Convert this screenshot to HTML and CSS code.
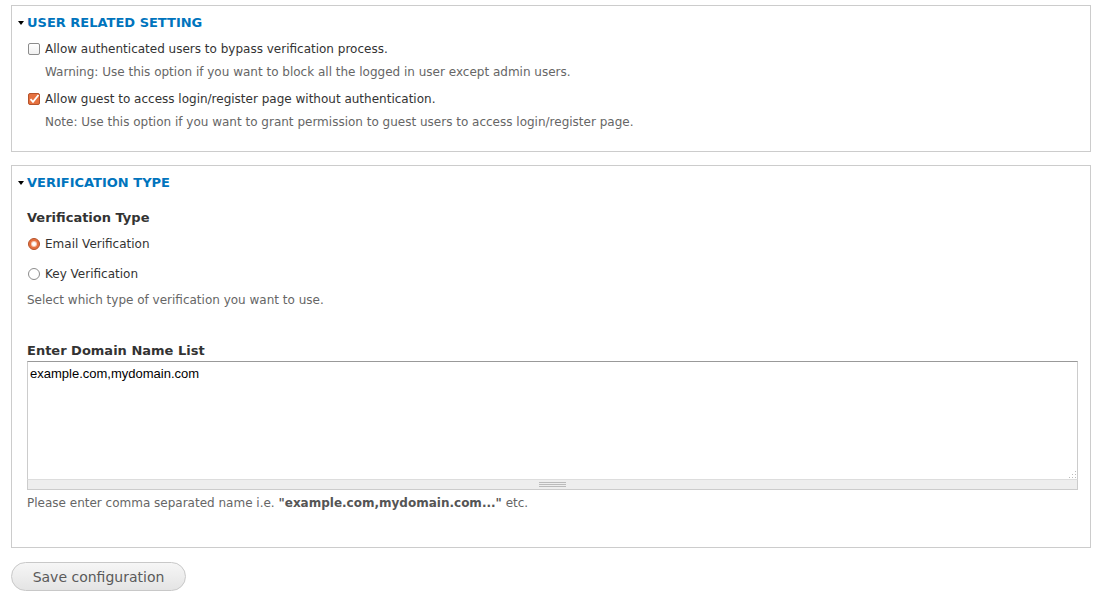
FILE: index.html
```html
<!DOCTYPE html>
<html>
<head>
<meta charset="utf-8">
<link rel="stylesheet" href="styles.css">
</head>
<body>
<form class="page">
  <div class="fieldset fs-user">
    <div class="legend"><span class="tri"></span>USER RELATED SETTING</div>
    <div class="item first">
      <span class="check"></span>
      <span class="label">Allow authenticated users to bypass verification process.</span>
    </div>
    <div class="desc indent">Warning: Use this option if you want to block all the logged in user except admin users.</div>
    <div class="item second">
      <span class="check checked"><svg width="12" height="12" viewBox="0 0 12 12"><path d="M2.5 6.2 L5 8.8 L10.5 2" fill="none" stroke="#fff" stroke-width="1.8"/></svg></span>
      <span class="label">Allow guest to access login/register page without authentication.</span>
    </div>
    <div class="desc indent">Note: Use this option if you want to grant permission to guest users to access login/register page.</div>
  </div>

  <div class="fieldset fs-type">
    <div class="legend"><span class="tri"></span>VERIFICATION TYPE</div>
    <div class="field-title">Verification Type</div>
    <div class="item radio-email">
      <span class="radio checked"><span class="dot"></span></span>
      <span class="label">Email Verification</span>
    </div>
    <div class="item radio-key">
      <span class="radio"></span>
      <span class="label">Key Verification</span>
    </div>
    <div class="desc sel-desc">Select which type of verification you want to use.</div>

    <div class="field-title domain-title">Enter Domain Name List</div>
    <div class="textarea-wrap">
      <div class="textarea">example.com,mydomain.com<span class="resize"></span></div>
      <div class="grippie"><span class="grip"></span></div>
    </div>
    <div class="desc help">Please enter comma separated name i.e. <strong>"example.com,mydomain.com..."</strong> etc.</div>
  </div>

  <div class="actions">
    <button type="button" class="btn">Save configuration</button>
  </div>
</form>
</body>
</html>
```

FILE: styles.css
```css
html, body {
  margin: 0;
  padding: 0;
  background: #fff;
}
body {
  font-family: "DejaVu Sans", Verdana, sans-serif;
  font-size: 12px;
  line-height: 18px;
  color: #333;
}
.page {
  padding: 5px 14px 0 11px;
}
.fieldset {
  border: 1px solid #ccc;
  padding: 8px 12px 0 15px;
}
.fs-user {
  padding-bottom: 20px;
}
.fs-type {
  margin-top: 13px;
  padding-bottom: 35px;
}
.legend {
  position: relative;
  font-weight: bold;
  font-size: 13px;
  color: #0074bd;
}
.tri {
  display: inline-block;
  width: 0;
  height: 0;
  border-left: 3.5px solid transparent;
  border-right: 3.5px solid transparent;
  border-top: 4px solid #000;
  margin-left: -9px;
  margin-right: 3px;
  vertical-align: 2px;
}
.item {
  display: flex;
  align-items: center;
  height: 18px;
  color: #333;
}
.item.first { margin-top: 8px; }
.item.second { margin-top: 9px; }
.desc {
  color: #666;
}
.desc.indent {
  margin-top: 5px;
  padding-left: 18px;
}
.check {
  box-sizing: border-box;
  width: 12px;
  height: 12px;
  border: 1px solid #8c8c8c;
  border-radius: 2px;
  background: linear-gradient(#fff, #f0f0f0);
  margin-left: 1px;
  margin-right: 5px;
  position: relative;
}
.check.checked {
  border-color: #b5532b;
  background: #e6713f;
}
.check svg {
  position: absolute;
  left: -1px;
  top: -1px;
}
.label {
  white-space: nowrap;
}
.field-title {
  font-weight: bold;
  font-size: 13px;
  margin-top: 17px;
  color: #333;
}
.radio {
  box-sizing: border-box;
  width: 12px;
  height: 12px;
  border: 1px solid #8c8c8c;
  border-radius: 50%;
  background: #fff;
  margin-left: 1px;
  margin-right: 5px;
  display: flex;
  align-items: center;
  justify-content: center;
}
.radio.checked {
  border-color: #b5532b;
  background: #e6713f;
}
.dot {
  width: 4px;
  height: 4px;
  border-radius: 50%;
  background: #fff;
  box-shadow: 0 0 0 1px #f6c8b3;
}
.radio-email { margin-top: 8px; }
.radio-key { margin-top: 12px; }
.sel-desc { margin-top: 8px; }
.domain-title { margin-top: 33px; }
.textarea-wrap {
  margin-top: 1px;
}
.textarea {
  position: relative;
  box-sizing: border-box;
  height: 118px;
  border: 1px solid #ccc;
  border-top-color: #999;
  border-bottom: none;
  padding: 4px 2px;
  font-family: "Liberation Sans", Arial, sans-serif;
  font-size: 13px;
  line-height: 16px;
  color: #000;
  background: #fff;
}
.resize {
  position: absolute;
  right: 1px;
  bottom: 1px;
  width: 8px;
  height: 8px;
  background:
    radial-gradient(circle, #bbb 0.8px, transparent 1px) 0 0 / 3px 3px;
  clip-path: polygon(100% 0, 100% 100%, 0 100%);
}
.grippie {
  box-sizing: border-box;
  height: 11px;
  background: #eee;
  border: 1px solid #ccc;
  border-top-color: #ddd;
  display: flex;
  justify-content: center;
  align-items: center;
}
.grip {
  width: 27px;
  height: 5px;
  border-top: 1px solid #bbb;
  border-bottom: 1px solid #bbb;
  box-sizing: border-box;
  position: relative;
}
.grip::after {
  content: "";
  position: absolute;
  left: 0;
  right: 0;
  top: 1px;
  border-top: 1px solid #bbb;
}
.help {
  margin-top: 4px;
}
.help strong {
  color: #555;
}
.actions {
  margin-top: 14px;
}
.btn {
  box-sizing: border-box;
  width: 175px;
  height: 29px;
  border: 1px solid #c8c8c8;
  border-radius: 15px;
  background: linear-gradient(#f6f6f6, #e4e4e4);
  font-family: "DejaVu Sans", Verdana, sans-serif;
  font-size: 14px;
  color: #5a5a5a;
  padding: 0;
  cursor: pointer;
}
```
